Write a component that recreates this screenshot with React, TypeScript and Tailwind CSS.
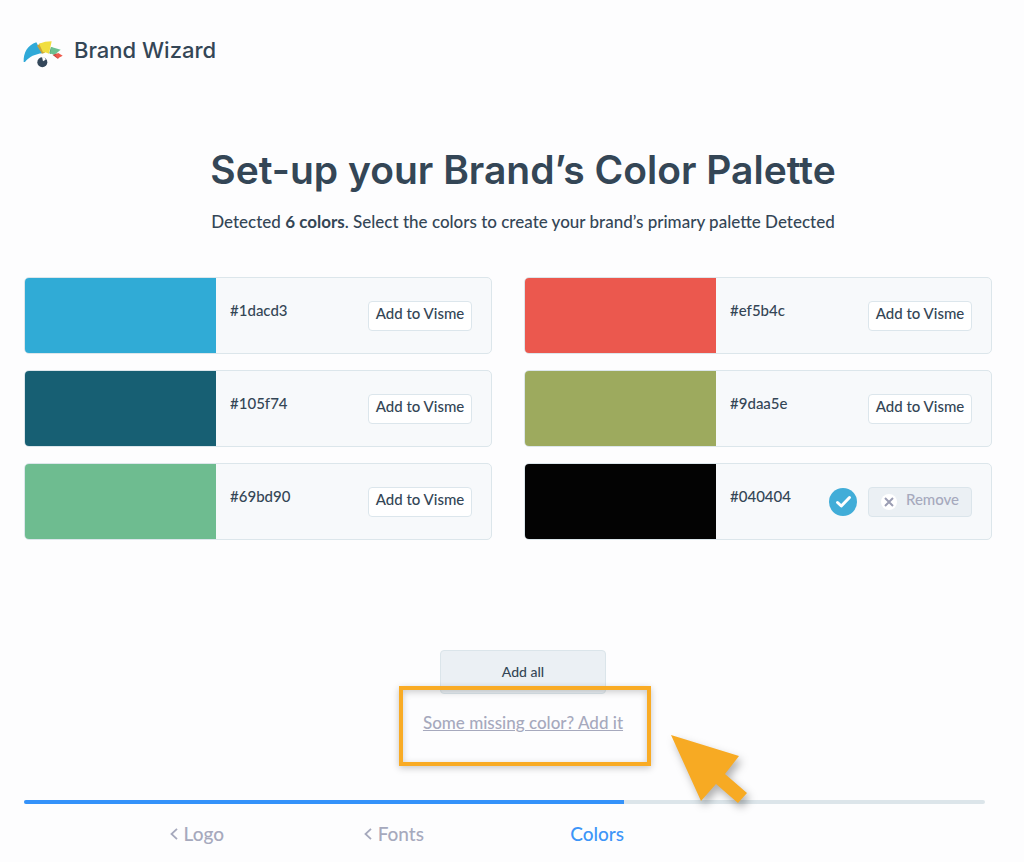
import { useState } from "react";

type Swatch = { hex: string; fill: string };

const swatches: Swatch[] = [
  { hex: "#1dacd3", fill: "bg-[#30abd6]" },
  { hex: "#ef5b4c", fill: "bg-[#eb584e]" },
  { hex: "#105f74", fill: "bg-[#175f73]" },
  { hex: "#9daa5e", fill: "bg-[#9daa5e]" },
  { hex: "#69bd90", fill: "bg-[#6ebc90]" },
  { hex: "#040404", fill: "bg-[#030303]" },
];

function Logo() {
  return (
    <svg viewBox="0 0 120 84" className="h-7 w-10" aria-hidden="true">
      <path d="M2 66C1 38 14 15 40 7L58 40C37 42 19 50 6 66Z" fill="#2fa9d8" />
      <path d="M42 17L52 10L66 38L57 41Z" fill="#c9a43a" />
      <path d="M48 11Q66 4 86 4L78 41Q68 37 60 37Z" fill="#f1de3f" />
      <path d="M79 40L84 21L90 24L84 42Z" fill="#4b9a72" />
      <path d="M85 21L113 29L94 45L81 40Z" fill="#6cc091" />
      <path d="M89 45L103 40L108 54L104 56Z" fill="#c4463f" />
      <path d="M96 46L106 39L119 47L105 55Z" fill="#ee5a4c" />
      <circle cx="58" cy="67" r="15" fill="#34475a" />
      <path d="M60 64L57 51L65 52L68 59Z" fill="#fdfdfe" />
    </svg>
  );
}

function SwatchCard({
  swatch,
  added,
  onToggle,
}: {
  swatch: Swatch;
  added: boolean;
  onToggle: () => void;
}) {
  return (
    <li className="flex h-[77px] overflow-hidden rounded-[5px] border border-[#dce6eb] bg-[#f7f9fb]">
      <div className={`w-[41%] ${swatch.fill}`} />
      <div className="flex flex-1 items-center pr-[19px] pl-[14px]">
        <span className="pb-3 text-[15px] leading-5">{swatch.hex}</span>
        <div className="ml-auto flex items-center gap-[11px]">
          {added && (
            <svg viewBox="0 0 28 28" className="size-7" role="img" aria-label="Added">
              <circle cx="14" cy="14" r="14" fill="#41add8" />
              <path
                d="M8.5 14.5L12.3 18L20.5 9.5"
                fill="none"
                stroke="#fff"
                strokeWidth="3"
                strokeLinecap="round"
                strokeLinejoin="round"
              />
            </svg>
          )}
          {added ? (
            <button
              type="button"
              onClick={onToggle}
              className="flex h-[30px] w-[104px] items-center justify-center gap-[9px] rounded-[4px] border border-[#dbe5eb] bg-[#ebf0f4] text-[15px] leading-5 text-[#a6a9bd]"
            >
              <svg viewBox="0 0 16 16" className="size-4" aria-hidden="true">
                <circle cx="8" cy="8" r="8" fill="#fff" />
                <path d="M4 4L12 12M12 4L4 12" stroke="#9a9db3" strokeWidth="2" />
              </svg>
              <span className="pb-[6px]">Remove</span>
            </button>
          ) : (
            <button
              type="button"
              onClick={onToggle}
              className="h-[30px] w-[104px] rounded-[4px] border border-[#dce6ec] bg-white pb-[6px] text-[15px] leading-5"
            >
              Add to Visme
            </button>
          )}
        </div>
      </div>
    </li>
  );
}

function Chevron() {
  return (
    <svg viewBox="0 0 8 12" className="h-3 w-2" aria-hidden="true">
      <path d="M7 0.8L1.5 6L7 11.2" fill="none" stroke="currentColor" strokeWidth="1.8" />
    </svg>
  );
}

export default function App() {
  const [added, setAdded] = useState<string[]>(["#040404"]);
  const toggle = (hex: string) =>
    setAdded((list) => (list.includes(hex) ? list.filter((h) => h !== hex) : [...list, hex]));

  return (
    <div className="min-h-screen bg-[#fdfdfe] font-[Lato,sans-serif] font-medium text-[#344656]">
      <header className="flex items-center gap-[11px] pt-9 pl-[23px]">
        <div className="pt-1">
          <Logo />
        </div>
        <span className="pb-1 font-[Inter,sans-serif] text-[22px] leading-7 font-medium">
          Brand Wizard
        </span>
      </header>

      <main>
        <div className="pt-[78px] pl-[22px] text-center">
          <h1 className="font-[Inter,sans-serif] text-[39px] leading-[48px] font-semibold">
            Set-up your Brand’s Color Palette
          </h1>
          <p className="mt-4 text-[17px] leading-6">
            Detected <b>6 colors</b>. Select the colors to create your brand’s primary palette
            Detected
          </p>
        </div>

        <ul className="mt-[43px] grid grid-cols-2 gap-x-8 gap-y-4 pr-8 pl-6">
          {swatches.map((s) => (
            <SwatchCard
              key={s.hex}
              swatch={s}
              added={added.includes(s.hex)}
              onToggle={() => toggle(s.hex)}
            />
          ))}
        </ul>

        <div className="mt-[110px] flex flex-col items-center pl-[22px]">
          <button
            type="button"
            onClick={() => setAdded(swatches.map((s) => s.hex))}
            className="h-11 w-[166px] rounded-[4px] border border-[#dbe5ea] bg-[#ebf0f4] text-[14px] leading-5"
          >
            Add all
          </button>
          <div className="relative mt-[17px]">
            <a
              href="#add-color"
              className="block text-[17px] leading-6 text-[#a6a9bd] underline"
            >
              Some missing color? Add it
            </a>
            <div className="pointer-events-none absolute -right-7 -left-6 -top-[25px] h-20 border-4 border-[#f9ab24] shadow-[0_2px_7px_rgba(0,0,0,0.22),inset_0_2px_7px_rgba(0,0,0,0.2)]" />
            <svg
              viewBox="0 0 90 84"
              className="pointer-events-none absolute top-[20px] left-full ml-11 h-[84px] w-[90px] drop-shadow-[3px_5px_4px_rgba(0,0,0,0.3)]"
              aria-hidden="true"
            >
              <path d="M4 4L72 25L58 43L80 62L71 72L49 53L34 70Z" fill="#f7aa23" />
            </svg>
          </div>
        </div>
      </main>

      <footer className="mt-[65px] pb-3 pl-6">
        <div className="mr-[39px] h-1 rounded-full bg-[#dce5ea]">
          <div className="h-full w-[62.4%] rounded-l-full bg-[#3492fa]" />
        </div>
        <nav className="mt-[18px] grid grid-cols-5 text-[19px] leading-6 text-[#a6a9bd]">
          <a href="#logo" className="flex items-center justify-end gap-[6px]">
            <Chevron />
            Logo
          </a>
          <a href="#fonts" className="flex items-center justify-end gap-[6px]">
            <Chevron />
            Fonts
          </a>
          <a href="#colors" aria-current="step" className="text-right text-[#3d95f8]">
            Colors
          </a>
        </nav>
      </footer>
    </div>
  );
}
